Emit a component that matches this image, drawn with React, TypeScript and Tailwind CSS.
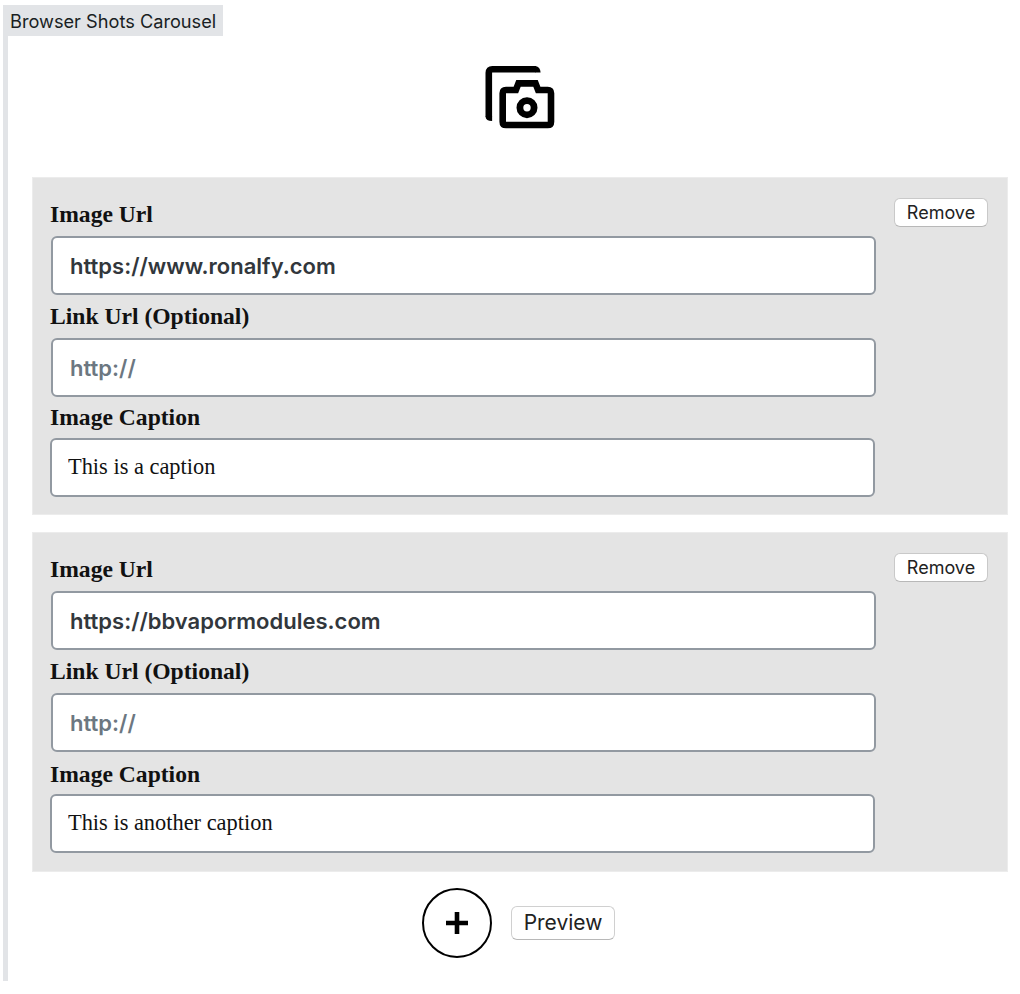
import { useState } from 'react';

interface Shot {
  id: number;
  imageUrl: string;
  linkUrl: string;
  caption: string;
}

const INITIAL_SHOTS: Shot[] = [
  { id: 1, imageUrl: 'https://www.ronalfy.com', linkUrl: '', caption: 'This is a caption' },
  { id: 2, imageUrl: 'https://bbvapormodules.com', linkUrl: '', caption: 'This is another caption' },
];

const LABEL_CLASS =
  "block h-[41px] pt-[2px] whitespace-nowrap font-['Liberation_Serif',serif] text-[23.6px] leading-[34px] font-bold text-[#111]";

const URL_CLASS =
  "block ml-px w-[825px] h-[59px] rounded-[6px] border-2 border-[#9299a1] bg-white px-[17px] font-['Inter',sans-serif] text-[22px] font-semibold text-[#32373c] placeholder:text-[#6c7781] outline-none";

const CAPTION_CLASS =
  "block w-[825px] h-[59px] rounded-[6px] border-2 border-[#9299a1] bg-white px-[16px] pb-[2px] font-['Liberation_Serif',serif] text-[22.4px] text-[#111] outline-none";

function CarouselIcon() {
  return (
    <svg width="70" height="63" viewBox="15 16 70 63" fill="none" stroke="#000" strokeWidth="6.6">
      <path d="M66 19.3 H22.3 Q18.8 19.3 18.8 22.8 V67" />
      <path d="M65.5 16 Q70.2 16.8 70.6 22.6 H65.5 Z" fill="#000" stroke="none" />
      <path d="M15.5 66.5 V66.5 Q15.8 71 22.1 71 V66.5 Z" fill="#000" stroke="none" />
      <path d="M36 40 H45.9 L48.5 33.4 H65.5 L68.1 40 H77.7 Q81 40 81 43.3 V71.7 Q81 75 77.7 75 H36 Q32.7 75 32.7 71.7 V43.3 Q32.7 40 36 40 Z" />
      <circle cx="57" cy="57.7" r="7.1" strokeWidth="6.8" />
    </svg>
  );
}

interface ShotCardProps {
  shot: Shot;
  onChange: (shot: Shot) => void;
  onRemove: () => void;
}

function ShotCard({ shot, onChange, onRemove }: ShotCardProps) {
  return (
    <div className="group flex items-start justify-between border border-[#ececec] bg-[#e4e4e4] pt-[17px] pr-[19px] pb-[17px] pl-[17px] last:pb-[18px]">
      <div>
        <label>
          <span className={LABEL_CLASS}>Image Url</span>
          <input
            className={URL_CLASS}
            placeholder="http://"
            value={shot.imageUrl}
            onChange={(e) => onChange({ ...shot, imageUrl: e.target.value })}
          />
        </label>
        <label className="block pt-[2px]">
          <span className={LABEL_CLASS}>Link Url (Optional)</span>
          <input
            className={URL_CLASS}
            placeholder="http://"
            value={shot.linkUrl}
            onChange={(e) => onChange({ ...shot, linkUrl: e.target.value })}
          />
        </label>
        <label className="block pt-px group-last:pt-[3px]">
          <span className={LABEL_CLASS + ' -mb-px group-last:-mb-[2px]'}>Image Caption</span>
          <input
            className={CAPTION_CLASS}
            value={shot.caption}
            onChange={(e) => onChange({ ...shot, caption: e.target.value })}
          />
        </label>
      </div>
      <button
        onClick={onRemove}
        className="mt-[3px] h-[29px] w-[94px] rounded-[6px] border border-[#c9c9c9] border-b-[#b8b8b8] bg-white pt-px font-['Inter',sans-serif] text-[18px] leading-[26px] text-[#222]"
      >
        Remove
      </button>
    </div>
  );
}

export default function App() {
  const [shots, setShots] = useState<Shot[]>(INITIAL_SHOTS);

  const updateShot = (next: Shot) => {
    setShots((prev) => prev.map((s) => (s.id === next.id ? next : s)));
  };

  const removeShot = (id: number) => {
    setShots((prev) => prev.filter((s) => s.id !== id));
  };

  const addShot = () => {
    setShots((prev) => [...prev, { id: Date.now(), imageUrl: '', linkUrl: '', caption: '' }]);
  };

  return (
    <div className="min-h-[994px] w-[1020px] bg-white pt-[5px] pl-[3px]">
      <div className="h-[31px] w-[220px] bg-[#e2e4e7] pl-[7px] font-['Inter',sans-serif] text-[18.2px] leading-[33px] whitespace-nowrap text-[#191e23]">
        Browser Shots Carousel
      </div>
      <div className="min-h-[945px] border-l-[5px] border-[#e2e4e7] pt-[30px] pr-[12px] pl-[24px]">
        <div className="flex h-[111px] justify-center">
          <CarouselIcon />
        </div>

        <div className="flex flex-col gap-[17px]">
          {shots.map((shot) => (
            <ShotCard
              key={shot.id}
              shot={shot}
              onChange={updateShot}
              onRemove={() => removeShot(shot.id)}
            />
          ))}
        </div>

        {/* Add / preview actions */}
        <div className="mt-[16px] flex items-center justify-center gap-[19px] pr-[3px]">
          <button
            onClick={addShot}
            aria-label="Add shot"
            className="flex size-[70px] items-center justify-center rounded-full border-2 border-black"
          >
            <svg width="22" height="22" viewBox="0 0 22 22" fill="none" stroke="#000" strokeWidth="4.6">
              <path d="M11 0 V22 M0 11 H22" />
            </svg>
          </button>
          <button className="h-[34px] w-[104px] rounded-[6px] border border-[#d0d0d0] border-b-[#b8b8b8] bg-white font-['Inter',sans-serif] text-[21px] leading-[32px] text-[#222]">
            Preview
          </button>
        </div>
      </div>
    </div>
  );
}
